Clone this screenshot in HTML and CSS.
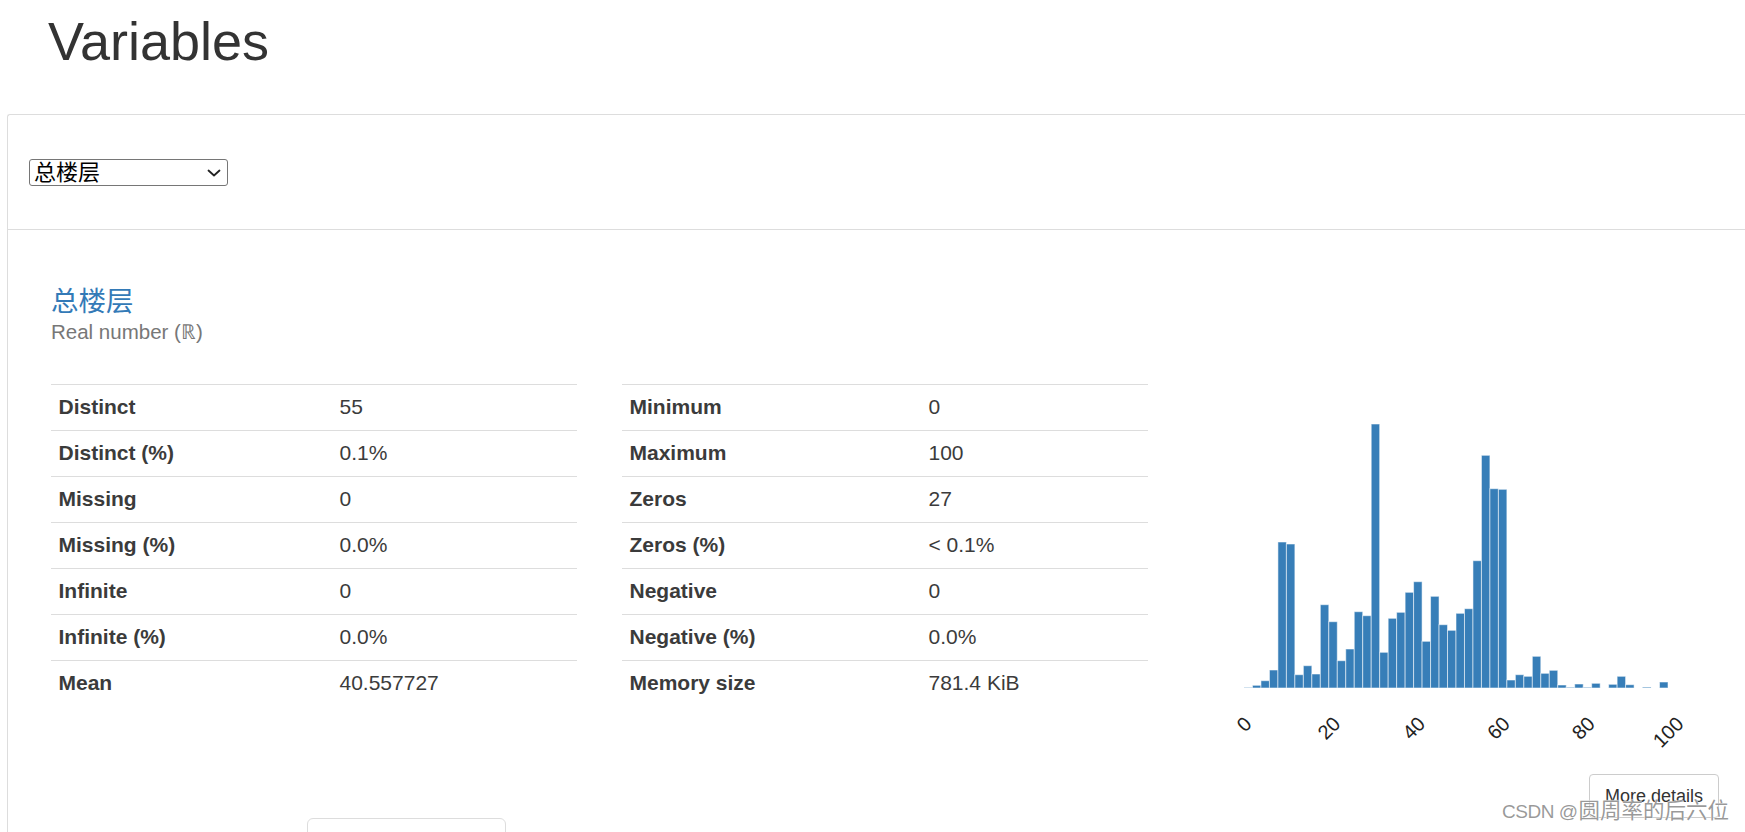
FILE: index.html
```html
<!DOCTYPE html>
<html lang="zh">
<head>
<meta charset="utf-8">
<title>Variables</title>
<link rel="stylesheet" href="styles.css">
</head>
<body>
<div class="page">
  <h1 class="section-title">Variables</h1>

  <div class="panel">
    <div class="panel-heading">
      <span class="select-wrap">
        <select class="var-select">
          <option>总楼层</option>
        </select>
        <svg class="select-arrow" width="14" height="10" viewBox="0 0 14 10" xmlns="http://www.w3.org/2000/svg">
          <path d="M1.5 2.5 L7 7.5 L12.5 2.5" fill="none" stroke="#222222" stroke-width="1.8" stroke-linecap="round" stroke-linejoin="round"/>
        </svg>
      </span>
    </div>

    <div class="panel-body">
      <div class="var-name">总楼层</div>
      <div class="var-type">Real number (ℝ)</div>

      <div class="var-row">
        <table class="stats stats-left">
          <colgroup><col class="c1"><col class="c2"></colgroup>
          <tbody>
            <tr><th>Distinct</th><td>55</td></tr>
            <tr><th>Distinct (%)</th><td>0.1%</td></tr>
            <tr><th>Missing</th><td>0</td></tr>
            <tr><th>Missing (%)</th><td>0.0%</td></tr>
            <tr><th>Infinite</th><td>0</td></tr>
            <tr><th>Infinite (%)</th><td>0.0%</td></tr>
            <tr><th>Mean</th><td>40.557727</td></tr>
          </tbody>
        </table>

        <table class="stats stats-right">
          <colgroup><col class="c1"><col class="c2"></colgroup>
          <tbody>
            <tr><th>Minimum</th><td>0</td></tr>
            <tr><th>Maximum</th><td>100</td></tr>
            <tr><th>Zeros</th><td>27</td></tr>
            <tr><th>Zeros (%)</th><td>&lt; 0.1%</td></tr>
            <tr><th>Negative</th><td>0</td></tr>
            <tr><th>Negative (%)</th><td>0.0%</td></tr>
            <tr><th>Memory size</th><td>781.4 KiB</td></tr>
          </tbody>
        </table>

        <div class="chart-col">
          <svg class="hist" width="526" height="390" viewBox="0 0 526 390" xmlns="http://www.w3.org/2000/svg">
            <g class="bars" fill="#377eb8" stroke="#ffffff" stroke-opacity="0.55" stroke-width="1">
              <rect x="51.00" y="303.5" width="8.48" height="0.5"/>
              <rect x="59.48" y="301.3" width="8.48" height="2.7"/>
              <rect x="67.96" y="296.7" width="8.48" height="7.3"/>
              <rect x="76.44" y="286" width="8.48" height="18"/>
              <rect x="84.92" y="158" width="8.48" height="146"/>
              <rect x="93.40" y="160" width="8.48" height="144"/>
              <rect x="101.88" y="290.7" width="8.48" height="13.3"/>
              <rect x="110.36" y="281.7" width="8.48" height="22.3"/>
              <rect x="118.84" y="290" width="8.48" height="14"/>
              <rect x="127.32" y="220.7" width="8.48" height="83.3"/>
              <rect x="135.80" y="237.7" width="8.48" height="66.3"/>
              <rect x="144.28" y="276.7" width="8.48" height="27.3"/>
              <rect x="152.76" y="265" width="8.48" height="39"/>
              <rect x="161.24" y="227.7" width="8.48" height="76.3"/>
              <rect x="169.72" y="231.7" width="8.48" height="72.3"/>
              <rect x="178.20" y="40" width="8.48" height="264"/>
              <rect x="186.68" y="268.3" width="8.48" height="35.7"/>
              <rect x="195.16" y="234.3" width="8.48" height="69.7"/>
              <rect x="203.64" y="228.3" width="8.48" height="75.7"/>
              <rect x="212.12" y="208.3" width="8.48" height="95.7"/>
              <rect x="220.60" y="197.7" width="8.48" height="106.3"/>
              <rect x="229.08" y="257.3" width="8.48" height="46.7"/>
              <rect x="237.56" y="212.3" width="8.48" height="91.7"/>
              <rect x="246.04" y="240.7" width="8.48" height="63.3"/>
              <rect x="254.52" y="246.3" width="8.48" height="57.7"/>
              <rect x="263.00" y="229.3" width="8.48" height="74.7"/>
              <rect x="271.48" y="224.7" width="8.48" height="79.3"/>
              <rect x="279.96" y="176.7" width="8.48" height="127.3"/>
              <rect x="288.44" y="71.3" width="8.48" height="232.7"/>
              <rect x="296.92" y="104.7" width="8.48" height="199.3"/>
              <rect x="305.40" y="105.3" width="8.48" height="198.7"/>
              <rect x="313.88" y="296" width="8.48" height="8"/>
              <rect x="322.36" y="290.7" width="8.48" height="13.3"/>
              <rect x="330.84" y="292.3" width="8.48" height="11.7"/>
              <rect x="339.32" y="272.3" width="8.48" height="31.7"/>
              <rect x="347.80" y="289.3" width="8.48" height="14.7"/>
              <rect x="356.28" y="286.3" width="8.48" height="17.7"/>
              <rect x="364.76" y="301" width="8.48" height="3"/>
              <rect x="373.24" y="303.3" width="8.48" height="0.7"/>
              <rect x="381.72" y="300" width="8.48" height="4"/>
              <rect x="390.20" y="303.3" width="8.48" height="0.7"/>
              <rect x="398.68" y="299.3" width="8.48" height="4.7"/>
              <rect x="415.64" y="300.3" width="8.48" height="3.7"/>
              <rect x="424.12" y="292.3" width="8.48" height="11.7"/>
              <rect x="432.60" y="300.7" width="8.48" height="3.3"/>
              <rect x="449.56" y="303" width="8.48" height="1"/>
              <rect x="466.52" y="298" width="8.48" height="6"/>
            </g>
            <g class="ticks">
              <text x="51" y="340" transform="rotate(-45 51 340)">0</text>
              <text x="135.8" y="344" transform="rotate(-45 135.8 344)">20</text>
              <text x="220.6" y="344" transform="rotate(-45 220.6 344)">40</text>
              <text x="305.4" y="344" transform="rotate(-45 305.4 344)">60</text>
              <text x="390.2" y="344" transform="rotate(-45 390.2 344)">80</text>
              <text x="475" y="348" transform="rotate(-45 475 348)">100</text>
            </g>
          </svg>
          <button class="btn-details" type="button">More details</button>
        </div>
      </div>

      <div class="next-row">
        <div class="next-box"></div>
      </div>
    </div>
  </div>
</div>

<div class="watermark"><span class="wm-latin">CSDN @</span>圆周率的后六位</div>
</body>
</html>
```

FILE: styles.css
```css
html, body {
  margin: 0;
  padding: 0;
  overflow: hidden;
  background: #ffffff;
}

body {
  font-family: "Liberation Sans", Arial, "Noto Sans CJK SC", sans-serif;
  color: #333333;
  font-size: 21px;
  line-height: 30px;
}

.page {
  padding-top: 11px;
}

.section-title {
  margin: 0 0 43px 48px;
  font-size: 54px;
  line-height: 60px;
  font-weight: 400;
  color: #333333;
}

.panel {
  margin-left: 7px;
  width: 1800px;
  border: 1px solid #dddddd;
  border-right: none;
  border-radius: 3px 0 0 0;
}

.panel-heading {
  height: 114px;
  display: flex;
  align-items: center;
  padding-left: 21px;
  border-bottom: 1px solid #dddddd;
}

.select-wrap {
  position: relative;
  display: inline-block;
  line-height: 0;
}

.var-select {
  width: 199px;
  height: 27px;
  padding: 0 24px 0 4px;
  font-family: "Liberation Sans", "Noto Sans CJK SC", sans-serif;
  font-size: 22px;
  line-height: 25px;
  color: #000000;
  background: #ffffff;
  border: 1px solid #767676;
  border-radius: 3px;
  margin: 0;
  appearance: none;
  -webkit-appearance: none;
}

.select-arrow {
  position: absolute;
  right: 7px;
  top: 9px;
  pointer-events: none;
}

.panel-body {
  padding: 57px 0 0 43px;
}

.var-name {
  font-family: "Liberation Sans", "Noto Sans CJK SC", sans-serif;
  font-size: 27.5px;
  line-height: 30px;
  color: #337ab7;
}

.var-type {
  font-size: 20.5px;
  line-height: 30px;
  color: #777777;
}

.var-row {
  display: flex;
  align-items: flex-start;
  gap: 45px;
  margin-top: 37px;
}

.stats {
  width: 526px;
  border-collapse: collapse;
  table-layout: fixed;
}

.stats th,
.stats td {
  border-top: 1px solid #dddddd;
  padding: 7px 7.5px 8px;
  text-align: left;
  vertical-align: middle;
  line-height: 30px;
  font-size: 21px;
  white-space: nowrap;
}

.stats th {
  font-weight: 700;
  color: #3b3b3b;
}

.stats td {
  color: #3b3b3b;
}

.stats-left .c1 { width: 281px; }
.stats-left .c2 { width: 245px; }
.stats-right .c1 { width: 299px; }
.stats-right .c2 { width: 227px; }

.chart-col {
  width: 526px;
  display: flex;
  flex-direction: column;
  align-items: flex-end;
}

.hist {
  display: block;
}

.ticks text {
  font-family: "Liberation Sans", Arial, sans-serif;
  font-size: 20px;
  fill: #222222;
  text-anchor: middle;
  dominant-baseline: central;
}

.btn-details {
  font-family: "Liberation Sans", Arial, sans-serif;
  font-size: 18px;
  line-height: 27px;
  padding: 7.5px 15px;
  color: #333333;
  background: #ffffff;
  border: 1px solid #cccccc;
  border-radius: 4px;
  margin: 0;
}

.next-row {
  display: flex;
  padding-left: 256px;
}

.next-box {
  width: 199px;
  height: 40px;
  border: 1px solid #dddddd;
  border-radius: 6px;
  box-sizing: border-box;
}

.watermark {
  position: absolute;
  top: 799px;
  right: 16px;
  font-family: "Liberation Sans", "Noto Sans CJK SC", sans-serif;
  font-size: 21.5px;
  line-height: 24px;
  color: rgba(120, 120, 120, 0.75);
  text-shadow: 0 0 1px #ffffff, 0 0 1px #ffffff;
  white-space: nowrap;
}

.wm-latin {
  font-size: 19px;
  letter-spacing: -0.5px;
  margin-right: 1px;
}
```
